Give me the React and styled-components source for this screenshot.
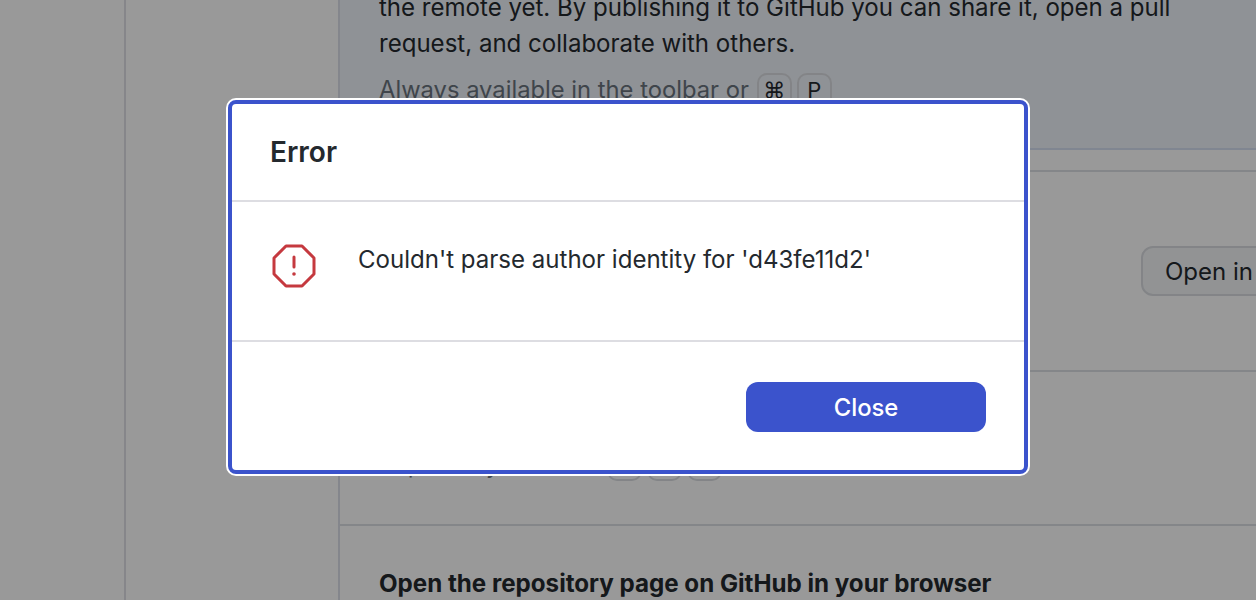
import React from "react";
import styled, { createGlobalStyle } from "styled-components";

const GlobalStyle = createGlobalStyle`
    html, body {
        margin: 0;
        height: 100%;
        overflow: hidden;
        background: #fff;
    }
    body {
        font-family: Inter, "Noto Sans", sans-serif;
        color: #24292e;
    }
`;

const Page = styled.div`
    position: relative;
    display: flex;
    width: 1256px;
    height: 600px;
    overflow: hidden;
`;

const Sidebar = styled.div`
    flex: 0 0 124px;
    border-right: 2px solid #dfdfe6;
`;

const RepoList = styled.div`
    flex: 0 0 212px;
    border-right: 2px solid #dde0ea;
`;

const Content = styled.div`
    flex: 0 0 auto;
    width: 1100px;
    margin-top: -100px;
`;

const Notice = styled.div`
    height: 250px;
    box-sizing: border-box;
    padding: 90px 39px 0;
    background: #eff3fa;
    border-bottom: 2px solid #d5dff2;
    margin-bottom: 20px;
`;

const NoticeText = styled.p`
    margin: 0;
    width: 800px;
    font-size: 24.05px;
    line-height: 36px;
`;

const Hint = styled.div`
    display: flex;
    align-items: center;
    gap: 5px;
    margin-top: 10px;
    font-size: 23.75px;
    line-height: 36px;
    color: #6a737d;
`;

const HintLabel = styled.span`
    margin-right: 3px;
`;

const RowHintLabel = styled(HintLabel)`
    margin-top: 4px;
`;

const Key = styled.span`
    display: flex;
    align-items: center;
    justify-content: center;
    box-sizing: border-box;
    width: 35px;
    height: 35px;
    border: 2px solid #dadde1;
    border-radius: 10px;
    color: #24292e;
    font-size: 22px;
`;

const Row = styled.div`
    display: flex;
    align-items: ${(p) => (p.$centered ? "center" : "flex-start")};
    box-sizing: border-box;
    height: ${(p) => p.$height}px;
    padding: ${(p) => (p.$centered ? 0 : p.$top)}px 39px 0;
    border-top: 2px solid #dcdfe4;
`;

const RowText = styled.div`
    flex: 0 0 762px;
`;

const RowTitle = styled.div`
    font-size: 24.15px;
    line-height: 36px;
    font-weight: 700;
`;

const RowHint = styled(Hint)`
    margin-top: 6px;
`;

const GhostButton = styled.button`
    flex: 0 0 auto;
    height: 50px;
    padding: 0 22px;
    background: #f3f5f7;
    border: 2px solid #dadde1;
    border-radius: 12px;
    font-family: inherit;
    font-size: 24px;
    color: #24292e;
    white-space: nowrap;
`;

const Scrim = styled.div`
    position: absolute;
    inset: 0;
    display: flex;
    align-items: flex-start;
    justify-content: center;
    padding-top: 100px;
    box-sizing: border-box;
    background: rgba(0, 0, 0, 0.4);
`;

const Dialog = styled.div`
    display: flex;
    flex-direction: column;
    box-sizing: border-box;
    width: 800px;
    height: 374px;
    background: #fff;
    border: 4px solid #3b53cc;
    border-radius: 8px;
    box-shadow: 0 0 0 2px #fff;
`;

const DialogHeader = styled.div`
    display: flex;
    align-items: center;
    box-sizing: border-box;
    height: 98px;
    padding: 0 38px;
    border-bottom: 2px solid #dddde2;
`;

const DialogTitle = styled.h1`
    margin: 0;
    font-size: 28px;
    font-weight: 600;
    color: #24292e;
`;

const DialogBody = styled.div`
    display: flex;
    align-items: flex-start;
    gap: 42px;
    box-sizing: border-box;
    height: 140px;
    padding: 40px 40px 0;
    border-bottom: 2px solid #dddde2;
`;

const Message = styled.p`
    margin: 0;
    font-size: 24.05px;
    line-height: 36px;
    color: #24292e;
`;

const DialogFooter = styled.div`
    flex: 1;
    display: flex;
    justify-content: flex-end;
    padding: 40px 38px 0 0;
`;

const PrimaryButton = styled.button`
    width: 240px;
    height: 50px;
    background: #3b53cc;
    border: none;
    border-radius: 12px;
    font-family: inherit;
    font-size: 23.8px;
    font-weight: 450;
    color: #fff;
`;

const StopSvg = styled.svg`
    flex: none;
    margin-top: 2px;
`;

const StopIcon = () => (
    <StopSvg width="44" height="44" viewBox="0 0 44 44" fill="none">
        <path d="M14 2 H30 L42 14 V30 L30 42 H14 L2 30 V14 Z" stroke="#c5393f" strokeWidth="3" strokeLinejoin="round" />
        <path d="M22 13 V23" stroke="#c5393f" strokeWidth="3" strokeLinecap="round" />
        <circle cx="22" cy="30" r="1.8" fill="#c5393f" />
    </StopSvg>
);

const App = () => {
    return (
        <>
            <GlobalStyle />
            <Page>
                <Sidebar />
                <RepoList />
                <Content>
                    <Notice>
                        <NoticeText>
                            the remote yet. By publishing it to GitHub you can share it, open a pull request, and collaborate with others.
                        </NoticeText>
                        <Hint>
                            <HintLabel>Always available in the toolbar or</HintLabel>
                            <Key>⌘</Key>
                            <Key>P</Key>
                        </Hint>
                    </Notice>
                    <Row $height={200} $centered>
                        <RowText>
                            <RowTitle>Open the repository in your external editor</RowTitle>
                        </RowText>
                        <GhostButton>Open in Visual Studio Code</GhostButton>
                    </Row>
                    <Row $height={154} $top={29}>
                        <RowText>
                            <RowTitle>View the files of your repository in Finder</RowTitle>
                            <RowHint>
                                <RowHintLabel>Repository menu or</RowHintLabel>
                                <Key>⌘</Key>
                                <Key>⇧</Key>
                                <Key>F</Key>
                            </RowHint>
                        </RowText>
                    </Row>
                    <Row $height={154} $top={40}>
                        <RowText>
                            <RowTitle>Open the repository page on GitHub in your browser</RowTitle>
                        </RowText>
                    </Row>
                </Content>
                <Scrim>
                    <Dialog>
                        <DialogHeader>
                            <DialogTitle>Error</DialogTitle>
                        </DialogHeader>
                        <DialogBody>
                            <StopIcon />
                            <Message>Couldn't parse author identity for 'd43fe11d2'</Message>
                        </DialogBody>
                        <DialogFooter>
                            <PrimaryButton>Close</PrimaryButton>
                        </DialogFooter>
                    </Dialog>
                </Scrim>
            </Page>
        </>
    );
};

export default App;
